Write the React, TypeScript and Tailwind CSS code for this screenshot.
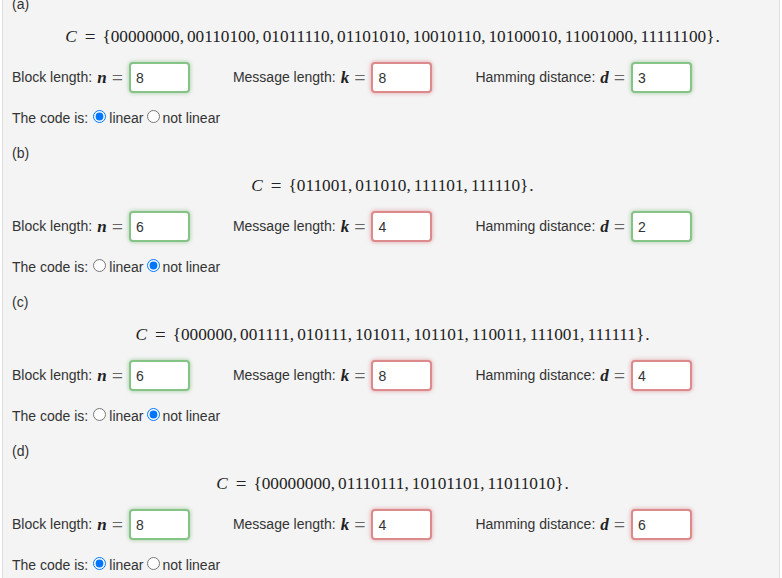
import React from 'react';

type Part = {
  tag: string;
  codewords: string[];
  n: string;
  k: string;
  d: string;
  nOk: boolean;
  kOk: boolean;
  dOk: boolean;
  linear: boolean;
};

const parts: Part[] = [
  {
    tag: '(a)',
    codewords: ['00000000', '00110100', '01011110', '01101010', '10010110', '10100010', '11001000', '11111100'],
    n: '8', k: '8', d: '3', nOk: true, kOk: false, dOk: true, linear: true,
  },
  {
    tag: '(b)',
    codewords: ['011001', '011010', '111101', '111110'],
    n: '6', k: '4', d: '2', nOk: true, kOk: false, dOk: true, linear: false,
  },
  {
    tag: '(c)',
    codewords: ['000000', '001111', '010111', '101011', '101101', '110011', '111001', '111111'],
    n: '6', k: '8', d: '4', nOk: true, kOk: false, dOk: false, linear: false,
  },
  {
    tag: '(d)',
    codewords: ['00000000', '01110111', '10101101', '11011010'],
    n: '8', k: '4', d: '6', nOk: true, kOk: false, dOk: false, linear: true,
  },
];

const serif = "font-['Liberation_Serif',serif]";

function Answer({ value, ok }: { value: string; ok: boolean }) {
  return (
    <input
      type="text"
      defaultValue={value}
      readOnly
      className={
        ok
          ? 'w-[61px] h-[31px] ml-[6px] px-[5px] bg-white rounded-[4px] border-2 border-[#86c386] shadow-[0_0_4px_rgba(92,168,92,0.55)] text-[14px] text-[#333] outline-none'
          : 'w-[61px] h-[31px] ml-[6px] px-[5px] bg-white rounded-[4px] border-2 border-[#dc8a8c] shadow-[0_0_4px_rgba(210,90,95,0.55)] text-[14px] text-[#333] outline-none'
      }
    />
  );
}

function Field({ label, sym, value, ok }: { label: string; sym: string; value: string; ok: boolean }) {
  return (
    <div className="flex items-center">
      <span className="text-[14px] text-[#333]">{label}</span>
      <span className={`${serif} ml-[5px] text-[17px] italic font-bold text-[#222]`}>{sym}</span>
      <span className={`${serif} ml-[5px] text-[20px] leading-[24px] text-[#666]`}>=</span>
      <Answer value={value} ok={ok} />
    </div>
  );
}

function Section({ p }: { p: Part }) {
  return (
    <div className="pb-[16px]">
      <div className="h-[20px] leading-[20px] text-[14px] text-[#333]">{p.tag}</div>
      <div className={`${serif} mt-[11px] h-[24px] leading-[24px] text-[17.25px] text-[#222] flex justify-center`}>
        <span className="italic pr-[1px]">C</span>
        <span className="mx-[7px] text-[19px]">=</span>
        <span>{'{'}</span>
        {p.codewords.map((w, i) => (
          <span key={w}>
            {w}
            {i < p.codewords.length - 1 ? <span className="mr-[3px]">,</span> : null}
          </span>
        ))}
        <span>{'}'}</span>
        <span className="ml-[1px]">.</span>
      </div>
      <div className="mt-[13px] h-[31px] flex items-center gap-[43px]">
        <Field label="Block length:" sym="n" value={p.n} ok={p.nOk} />
        <Field label="Message length:" sym="k" value={p.k} ok={p.kOk} />
        <Field label="Hamming distance:" sym="d" value={p.d} ok={p.dOk} />
      </div>
      <div className="mt-[14px] h-[20px] leading-[20px] text-[14px] text-[#333]">
        The code is:
        <input type="radio" name={p.tag} defaultChecked={p.linear} className="accent-[#0075ff]" style={{ margin: '3px 3px 0 5px' }} />
        linear
        <input type="radio" name={p.tag} defaultChecked={!p.linear} className="accent-[#0075ff]" style={{ margin: '3px 3px 0 3px' }} />
        not linear
      </div>
    </div>
  );
}

export default function App() {
  return (
    <div className="w-[782px] h-[578px] overflow-hidden bg-white font-['Liberation_Sans',Arial,sans-serif]">
      <div className="ml-[2px] w-[778px] -mt-[6px] bg-[#f4f4f4] border-x border-[#dedede] pl-[9px] pr-[6px]">
        {parts.map((p) => (
          <Section key={p.tag} p={p} />
        ))}
      </div>
    </div>
  );
}
